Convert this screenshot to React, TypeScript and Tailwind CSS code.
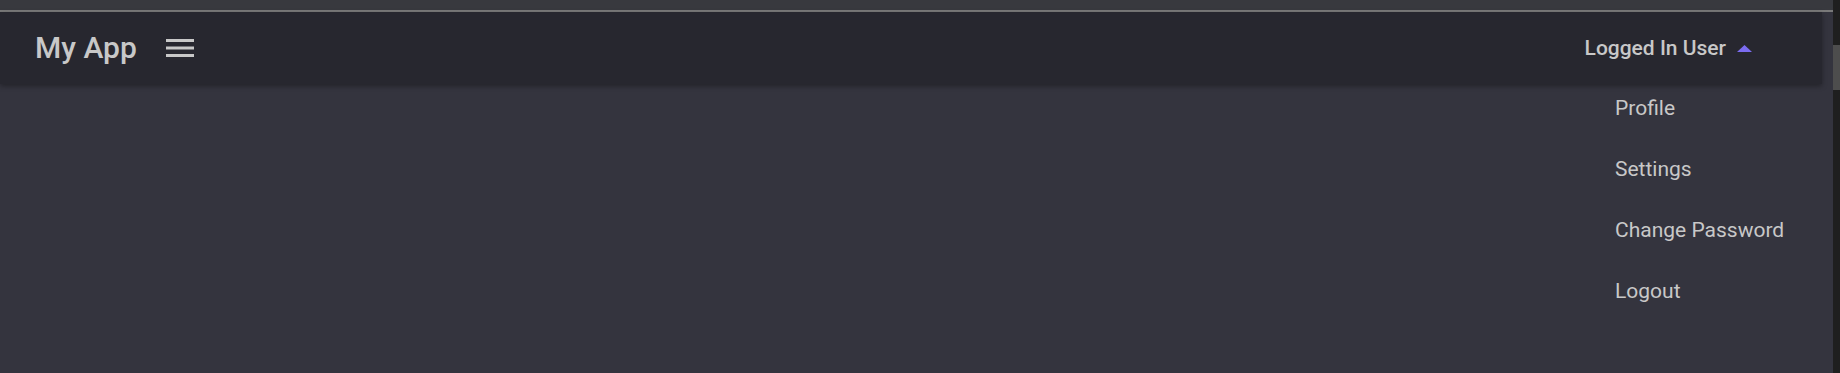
const MENU_ITEMS = ['Profile', 'Settings', 'Change Password', 'Logout']

function Hamburger() {
  return (
    <svg width="28" height="18" viewBox="0 0 28 18" className="block">
      <rect x="0" y="0" width="28" height="3" fill="#c8c8c8" />
      <rect x="0" y="7.5" width="28" height="3" fill="#c8c8c8" />
      <rect x="0" y="15" width="28" height="3" fill="#c8c8c8" />
    </svg>
  )
}

function Caret() {
  return (
    <svg width="15" height="7" viewBox="0 0 15 7" className="block">
      <polygon points="0,7 7.5,0 15,7" fill="#7b6cf0" />
    </svg>
  )
}

export default function App(): React.JSX.Element {
  return (
    <div className="flex h-[373px] w-full overflow-hidden bg-[#34343e] font-['Roboto',sans-serif]">
      <div className="relative flex flex-1 flex-col">
        {/* top strip */}
        <div className="h-[10px] bg-[#38393e]" />
        <div className="h-[2px] bg-[#7a7a7a]" />

        {/* navbar */}
        <div className="relative z-10 mr-[11px] flex h-[72px] items-center justify-between bg-[#27272f] pl-[35px] pr-[70px] shadow-[0_2px_5px_rgba(0,0,0,0.35)]">
          <div className="flex items-center gap-[29px]">
            <span className="text-[30px] font-medium leading-none text-[#c8c8c8]">My App</span>
            <Hamburger />
          </div>
          <div className="flex items-center gap-[11px]">
            <span className="text-[21px] font-medium leading-none text-[#c8c8c8]">Logged In User</span>
            <Caret />
          </div>
        </div>

        {/* user dropdown */}
        <div className="absolute right-[11px] top-[84px] w-[207px] pt-[10px]">
          {MENU_ITEMS.map(item => (
            <div key={item} className="pb-[33px] text-[21px] leading-7 text-[#c8c8c8]">
              {item}
            </div>
          ))}
        </div>
      </div>

      {/* scrollbar */}
      <div className="relative w-[7px] bg-[#1f1f1f]">
        <div className="absolute left-0 top-[45px] h-[45px] w-full bg-[#4d4d4d]" />
      </div>
    </div>
  )
}
